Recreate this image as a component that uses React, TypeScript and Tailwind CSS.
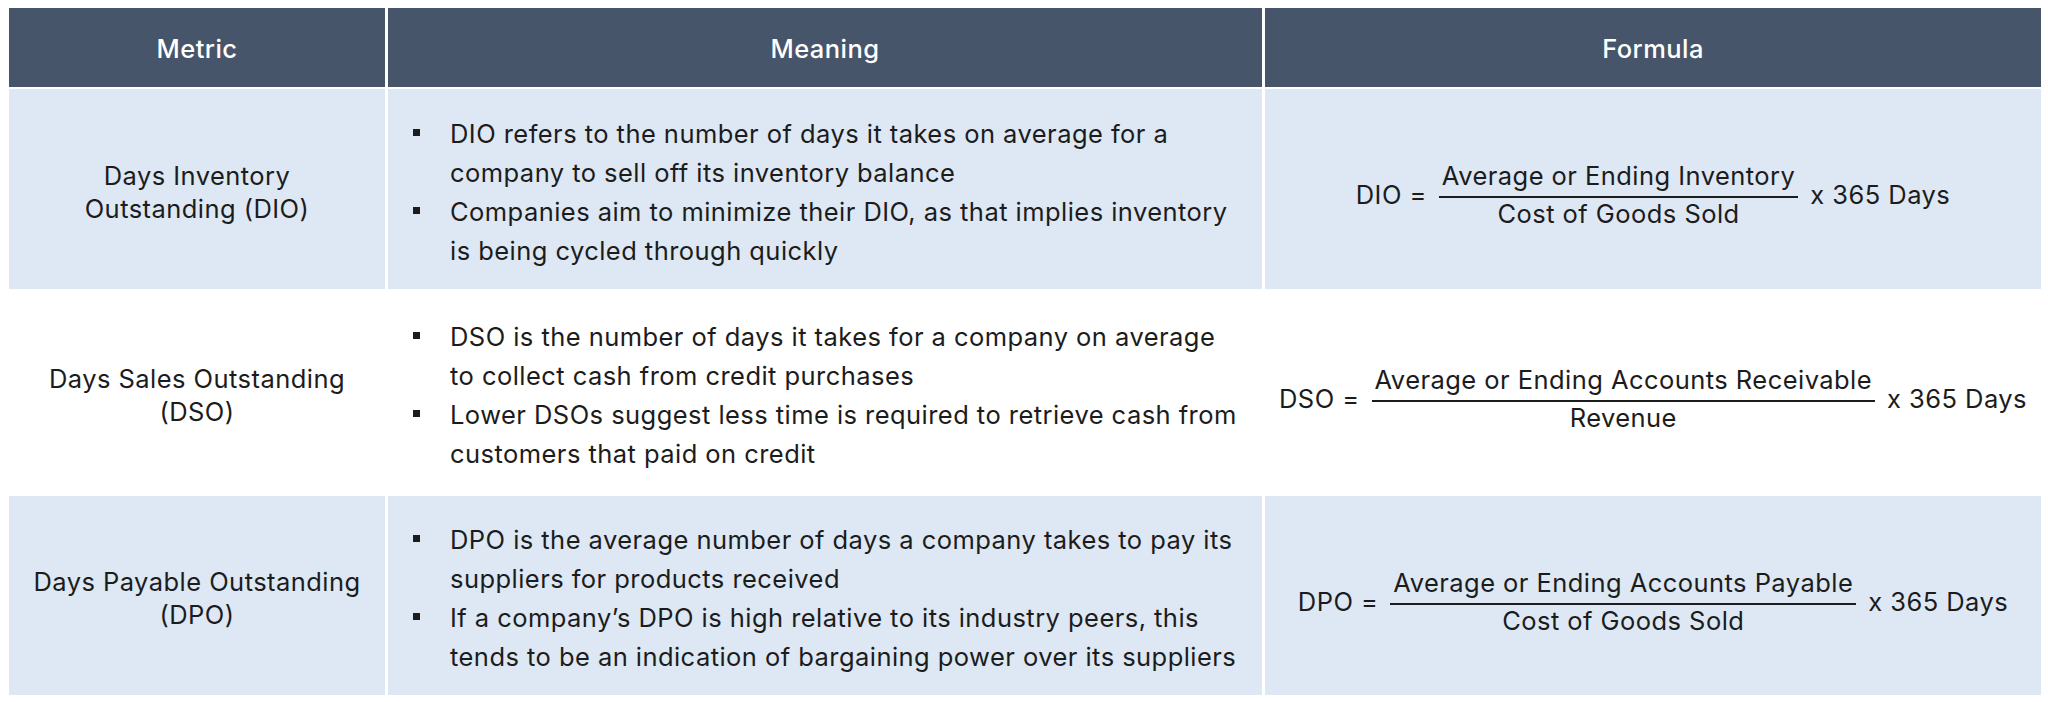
import React from "react";

const rows = [
  {
    metric: ["Days Inventory", "Outstanding (DIO)"],
    bullets: [
      ["DIO refers to the number of days it takes on average for a", "company to sell off its inventory balance"],
      ["Companies aim to minimize their DIO, as that implies inventory", "is being cycled through quickly"],
    ],
    label: "DIO",
    num: "Average or Ending Inventory",
    den: "Cost of Goods Sold",
    shaded: true,
  },
  {
    metric: ["Days Sales Outstanding", "(DSO)"],
    bullets: [
      ["DSO is the number of days it takes for a company on average", "to collect cash from credit purchases"],
      ["Lower DSOs suggest less time is required to retrieve cash from", "customers that paid on credit"],
    ],
    label: "DSO",
    num: "Average or Ending Accounts Receivable",
    den: "Revenue",
    shaded: false,
  },
  {
    metric: ["Days Payable Outstanding", "(DPO)"],
    bullets: [
      ["DPO is the average number of days a company takes to pay its", "suppliers for products received"],
      ["If a company\u2019s DPO is high relative to its industry peers, this", "tends to be an indication of bargaining power over its suppliers"],
    ],
    label: "DPO",
    num: "Average or Ending Accounts Payable",
    den: "Cost of Goods Sold",
    shaded: true,
  },
];

const Formula = ({ label, num, den }: { label: string; num: string; den: string }) => (
  <div className="flex items-center justify-center gap-3 pt-3">
    <span className="leading-[32px]">{label} =</span>
    <div className="flex flex-col">
      <div className="border-b-2 border-[#1c1c1c] px-[3px] pb-1 text-center leading-[32px] whitespace-nowrap">
        {num}
      </div>
      <div className="text-center leading-[32px] whitespace-nowrap">{den}</div>
    </div>
    <span className="leading-[32px] whitespace-nowrap">x 365 Days</span>
  </div>
);

const App = () => {
  return (
    <div className="w-[2048px] h-[702px] bg-white pt-2 pl-[9px] [font-family:Inter,'Liberation_Sans',sans-serif] text-[25.5px] tracking-[0.45px] text-[#1c1c1c]">
      <div className="grid grid-cols-[376px_874px_776px] grid-rows-[79px_200px_203px_199px] gap-x-[3px] gap-y-[2px]">
        {["Metric", "Meaning", "Formula"].map((h) => (
          <div
            key={h}
            className="flex items-center justify-center bg-[#46556a] pt-1 font-medium text-white"
          >
            {h}
          </div>
        ))}

        {rows.map((row) => {
          const bg = row.shaded ? "bg-[#dde8f4]" : "bg-white";
          return (
            <React.Fragment key={row.label}>
              <div className={`${bg} flex flex-col items-center justify-center pt-[5px] text-center leading-[33px]`}>
                {row.metric.map((line) => (
                  <span key={line}>{line}</span>
                ))}
              </div>
              <div className={`${bg} flex flex-col justify-center pt-[5px] pl-[25px]`}>
                {row.bullets.map((b, i) => (
                  <div key={i} className="flex">
                    <div className="w-[37px] shrink-0 pt-[15px]">
                      <div className="h-[7px] w-[7px] bg-[#1c1c1c]" />
                    </div>
                    <div className="leading-[39px] whitespace-nowrap">
                      {b[0]}
                      <br />
                      {b[1]}
                    </div>
                  </div>
                ))}
              </div>
              <div className={`${bg} flex items-center justify-center`}>
                <Formula label={row.label} num={row.num} den={row.den} />
              </div>
            </React.Fragment>
          );
        })}
      </div>
    </div>
  );
};

export default App;
